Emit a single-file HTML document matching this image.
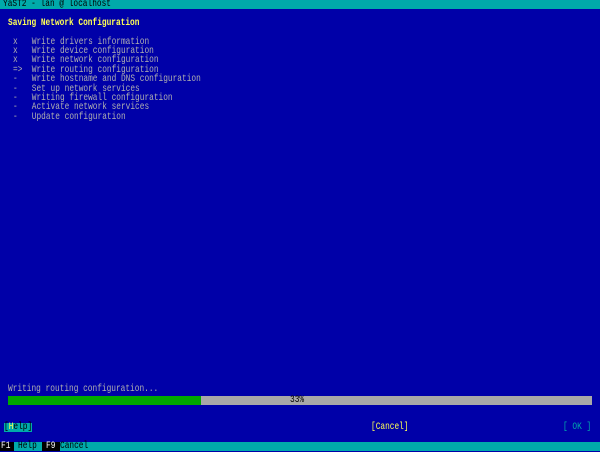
<!DOCTYPE html>
<html><head><style>
body{margin:0;width:600px;height:451px;background:#0000a8;overflow:hidden;position:relative;font-family:"Liberation Mono",monospace;font-size:10.5px;color:#b0b0b0}
.t{position:absolute;white-space:pre;line-height:9.4px;transform:scaleX(0.745);transform-origin:0 0}
.b{position:absolute}
</style></head><body>
<div class="b" style="left:0;top:0;width:600px;height:9px;background:#00aaaa"></div>
<div class="t" style="left:3px;top:0;color:#000">YaST2 - lan @ localhost</div>
<div class="t" style="left:8px;top:18.8px;color:#ffff55;font-weight:bold">Saving Network Configuration</div>
<div class="t" style="left:13px;top:37.6px">x   Write drivers information
x   Write device configuration
x   Write network configuration
=>  Write routing configuration
-   Write hostname and DNS configuration
-   Set up network services
-   Writing firewall configuration
-   Activate network services
-   Update configuration</div>
<div class="t" style="left:8px;top:385.4px">Writing routing configuration...</div>
<div class="b" style="left:8px;top:396px;width:584px;height:9px;background:#a8a8a8"></div>
<div class="b" style="left:8px;top:396px;width:193px;height:9px;background:#00a800"></div>
<div class="t" style="left:290px;top:396px;color:#000">33%</div>
<div class="b" style="left:4px;top:423px;width:28px;height:9px;background:#00aaaa"></div>
<div class="t" style="left:4px;top:423px;color:#000">[<span style="color:#ffff55">H</span>elp]</div>
<div class="t" style="left:371px;top:423px;color:#ffff55">[Cancel]</div>
<div class="t" style="left:563px;top:423px;color:#00aaaa">[ OK ]</div>
<div class="b" style="left:0;top:442px;width:600px;height:9px;background:#00aaaa"></div>
<div class="b" style="left:0;top:442px;width:14px;height:9px;background:#000"></div>
<div class="b" style="left:42px;top:442px;width:18px;height:9px;background:#000"></div>
<div class="t" style="left:1px;top:442px;color:#fff">F1</div>
<div class="t" style="left:18px;top:442px;color:#000">Help</div>
<div class="t" style="left:46px;top:442px;color:#fff">F9</div>
<div class="t" style="left:60px;top:442px;color:#000">Cancel</div>
</body></html>
